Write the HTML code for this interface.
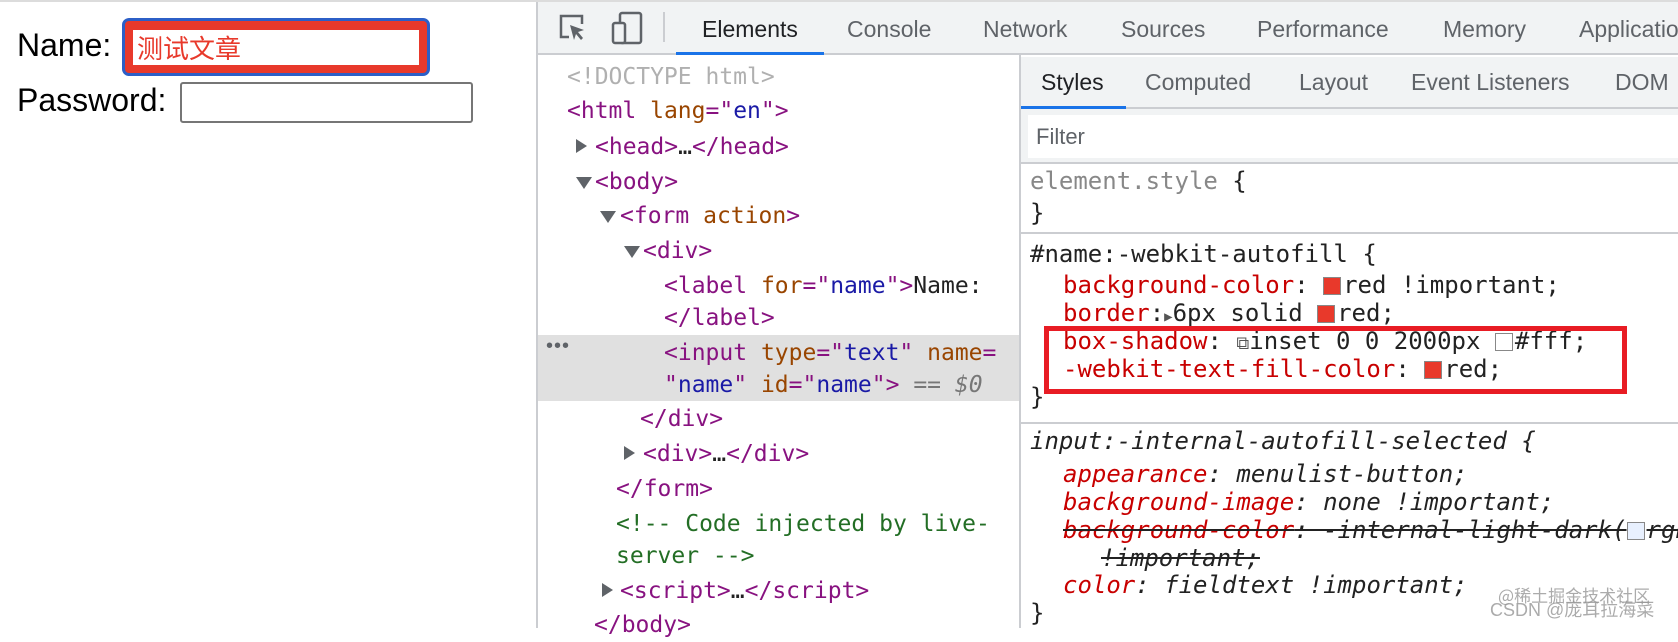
<!DOCTYPE html>
<html><head><meta charset="utf-8"><style>
*{margin:0;padding:0;box-sizing:border-box}
body{width:1678px;height:628px;overflow:hidden;background:#fff;position:relative;font-family:"Liberation Sans","Noto Sans CJK SC",sans-serif}
.a{position:absolute;white-space:nowrap}
.m{font-family:"DejaVu Sans Mono","Liberation Mono",monospace;font-size:23px;line-height:34px;color:#222}
.s{font-size:24px}
.t{color:#881280}.n{color:#994500}.v{color:#1a1aa6}.c{color:#236e25}
.p{color:#c80000}
.tab{position:absolute;font-size:23px;color:#5f6368;line-height:30px}
.sw{display:inline-block;width:18px;height:18px;background:#e8392b;border:1px solid #888;vertical-align:-2px;margin-right:2px}
.tri{display:inline-block;width:0;height:0}
.tr{border-top:7px solid transparent;border-bottom:7px solid transparent;border-left:11px solid #5f6368}
.td{border-left:8px solid transparent;border-right:8px solid transparent;border-top:12px solid #5f6368}
</style></head><body>
<div class="a" style="left:0;top:0;width:1678px;height:2px;background:#dcdcdc"></div>
<div class="a" style="left:17px;top:27px;font-size:32px;line-height:36px;color:#000">Name:</div>
<div class="a" style="left:122px;top:18px;width:308px;height:58px;border:3px solid #2c5fc7;border-radius:7px;background:#e8392b"></div>
<div class="a" style="left:133px;top:30px;width:286px;height:35px;background:#fff"></div>
<div class="a" style="left:137px;top:30px;font-size:26px;line-height:35px;color:#e8392b;font-family:'Noto Sans CJK SC',sans-serif">测试文章</div>
<div class="a" style="left:17px;top:82px;font-size:32px;line-height:36px;color:#000">Password:</div>
<div class="a" style="left:180px;top:82px;width:293px;height:41px;border:2px solid #767676;border-radius:3px"></div>
<div class="a" style="left:536px;top:2px;width:2px;height:626px;background:#cbcdd1"></div>
<div class="a" style="left:538px;top:2px;width:1140px;height:53px;background:#f1f3f4;border-bottom:2px solid #cbcdd1"></div>
<svg class="a" style="left:558px;top:13px" width="30" height="30" viewBox="0 0 30 30"><path d="M11 24H3V3h21v8" fill="none" stroke="#5f6368" stroke-width="2.5"/><path d="M12 12l14 5-6 2 5 6-2 2-5-6-2 6z" fill="#5f6368"/></svg>
<svg class="a" style="left:610px;top:11px" width="34" height="34" viewBox="0 0 34 34"><rect x="10" y="2" width="21" height="30" rx="2" fill="none" stroke="#5f6368" stroke-width="2.5"/><rect x="3" y="12" width="12" height="20" rx="2" fill="#f1f3f4" stroke="#5f6368" stroke-width="2.5"/></svg>
<div class="a" style="left:663px;top:12px;width:2px;height:30px;background:#cbcdd1"></div>
<div class="tab" style="left:702px;top:14px;color:#202124">Elements</div>
<div class="a" style="left:676px;top:52px;width:148px;height:3px;background:#1a73e8"></div>
<div class="tab" style="left:847px;top:14px">Console</div>
<div class="tab" style="left:983px;top:14px">Network</div>
<div class="tab" style="left:1121px;top:14px">Sources</div>
<div class="tab" style="left:1257px;top:14px">Performance</div>
<div class="tab" style="left:1443px;top:14px">Memory</div>
<div class="tab" style="left:1579px;top:14px">Application</div>
<div class="a" style="left:538px;top:335px;width:482px;height:66px;background:#e0e0e0"></div>
<div class="a" style="left:546px;top:336px;color:#5f6368;font-size:20px;line-height:20px;letter-spacing:1px">•••</div>
<div class="a m" style="left:567px;top:60px;color:#b0b0b0">&lt;!DOCTYPE html&gt;</div>
<div class="a m" style="left:567px;top:94px"><span class="t">&lt;html </span><span class="n">lang</span><span class="t">="</span><span class="v">en</span><span class="t">"&gt;</span></div>
<div class="a" style="left:576px;top:139px"><span class="tri tr"></span></div>
<div class="a m" style="left:595px;top:130px"><span class="t">&lt;head&gt;</span>…<span class="t">&lt;/head&gt;</span></div>
<div class="a" style="left:576px;top:176px"><span class="tri td"></span></div>
<div class="a m" style="left:595px;top:165px"><span class="t">&lt;body&gt;</span></div>
<div class="a" style="left:600px;top:210px"><span class="tri td"></span></div>
<div class="a m" style="left:620px;top:199px"><span class="t">&lt;form </span><span class="n">action</span><span class="t">&gt;</span></div>
<div class="a" style="left:624px;top:245px"><span class="tri td"></span></div>
<div class="a m" style="left:643px;top:234px"><span class="t">&lt;div&gt;</span></div>
<div class="a m" style="left:664px;top:269px"><span class="t">&lt;label </span><span class="n">for</span><span class="t">="</span><span class="v">name</span><span class="t">"&gt;</span>Name:</div>
<div class="a m" style="left:664px;top:301px"><span class="t">&lt;/label&gt;</span></div>
<div class="a m" style="left:664px;top:336px"><span class="t">&lt;input </span><span class="n">type</span><span class="t">="</span><span class="v">text</span><span class="t">" </span><span class="n">name</span><span class="t">=</span></div>
<div class="a m" style="left:664px;top:368px"><span class="t">"</span><span class="v">name</span><span class="t">" </span><span class="n">id</span><span class="t">="</span><span class="v">name</span><span class="t">"&gt;</span> <span style="color:#777">== <i>$0</i></span></div>
<div class="a m" style="left:640px;top:402px"><span class="t">&lt;/div&gt;</span></div>
<div class="a" style="left:624px;top:446px"><span class="tri tr"></span></div>
<div class="a m" style="left:643px;top:437px"><span class="t">&lt;div&gt;</span>…<span class="t">&lt;/div&gt;</span></div>
<div class="a m" style="left:616px;top:472px"><span class="t">&lt;/form&gt;</span></div>
<div class="a m c" style="left:616px;top:507px">&lt;!-- Code injected by live-</div>
<div class="a m c" style="left:616px;top:539px">server --&gt;</div>
<div class="a" style="left:602px;top:583px"><span class="tri tr"></span></div>
<div class="a m" style="left:620px;top:574px"><span class="t">&lt;script&gt;</span>…<span class="t">&lt;/script&gt;</span></div>
<div class="a m" style="left:594px;top:608px"><span class="t">&lt;/body&gt;</span></div>
<div class="a" style="left:1019px;top:55px;width:2px;height:573px;background:#cbcdd1"></div>
<div class="a" style="left:1021px;top:57px;width:657px;height:52px;background:#f1f3f4;border-bottom:2px solid #cbcdd1"></div>
<div class="tab" style="left:1041px;top:67px;color:#202124">Styles</div>
<div class="a" style="left:1021px;top:106px;width:105px;height:3px;background:#1a73e8"></div>
<div class="tab" style="left:1145px;top:67px">Computed</div>
<div class="tab" style="left:1299px;top:67px">Layout</div>
<div class="tab" style="left:1411px;top:67px">Event Listeners</div>
<div class="tab" style="left:1615px;top:67px">DOM</div>
<div class="a" style="left:1021px;top:109px;width:657px;height:55px;background:#f1f3f4;border-bottom:2px solid #cbcdd1"></div>
<div class="a" style="left:1028px;top:115px;width:650px;height:43px;background:#fff"></div>
<div class="tab" style="left:1036px;top:122px;font-size:22px">Filter</div>
<div class="a m s" style="left:1030px;top:165px;line-height:32px"><span style="color:#888">element.style</span> {</div>
<div class="a m s" style="left:1030px;top:197px;line-height:32px">}</div>
<div class="a" style="left:1021px;top:232px;width:657px;height:2px;background:#cbcdd1"></div>
<div class="a m s" style="left:1030px;top:240px;line-height:28px">#name:-webkit-autofill {</div>
<div class="a m s" style="left:1063px;top:271px;line-height:28px"><span class="p">background-color</span>: <span class="sw"></span>red !important;</div>
<div class="a m s" style="left:1063px;top:299px;line-height:28px"><span class="p">border</span>:<span style="font-size:14px;color:#555">▶</span>6px solid <span class="sw"></span>red;</div>
<div class="a m s" style="left:1063px;top:327px;line-height:28px"><span class="p">box-shadow</span>: <span style="font-size:18px;color:#555">⧉</span>inset 0 0 2000px <span class="sw" style="background:#fff"></span>#fff;</div>
<div class="a m s" style="left:1063px;top:355px;line-height:28px"><span class="p">-webkit-text-fill-color</span>: <span class="sw"></span>red;</div>
<div class="a m s" style="left:1030px;top:383px;line-height:28px">}</div>
<div class="a" style="left:1044px;top:326px;width:583px;height:68px;border:5px solid #e81c24"></div>
<div class="a" style="left:1021px;top:422px;width:657px;height:2px;background:#cbcdd1"></div>
<div class="a m s" style="left:1030px;top:427px;line-height:28px;font-style:italic">input:-internal-autofill-selected {</div>
<div class="a m s" style="left:1063px;top:460px;line-height:28px;font-style:italic"><span class="p">appearance</span>: menulist-button;</div>
<div class="a m s" style="left:1063px;top:488px;line-height:28px;font-style:italic"><span class="p">background-image</span>: none !important;</div>
<div class="a m s" style="left:1063px;top:516px;line-height:28px;font-style:italic;text-decoration:line-through"><span class="p">background-color</span>: -internal-light-dark(<span class="sw" style="background:#e8f0fe"></span>rgb</div>
<div class="a m s" style="left:1101px;top:544px;line-height:28px;font-style:italic;text-decoration:line-through">!important;</div>
<div class="a m s" style="left:1063px;top:571px;line-height:28px;font-style:italic"><span class="p">color</span>: fieldtext !important;</div>
<div class="a m s" style="left:1030px;top:599px;line-height:28px">}</div>
<div class="a" style="left:1498px;top:586px;font-size:17px;line-height:18px;color:rgba(150,150,150,.8);font-family:'Noto Sans CJK SC',sans-serif">@稀土掘金技术社区</div>
<div class="a" style="left:1490px;top:600px;font-size:18px;line-height:20px;color:rgba(150,150,150,.8);font-family:'Liberation Sans','Noto Sans CJK SC',sans-serif">CSDN @庞耳拉海菜</div>
</body></html>
